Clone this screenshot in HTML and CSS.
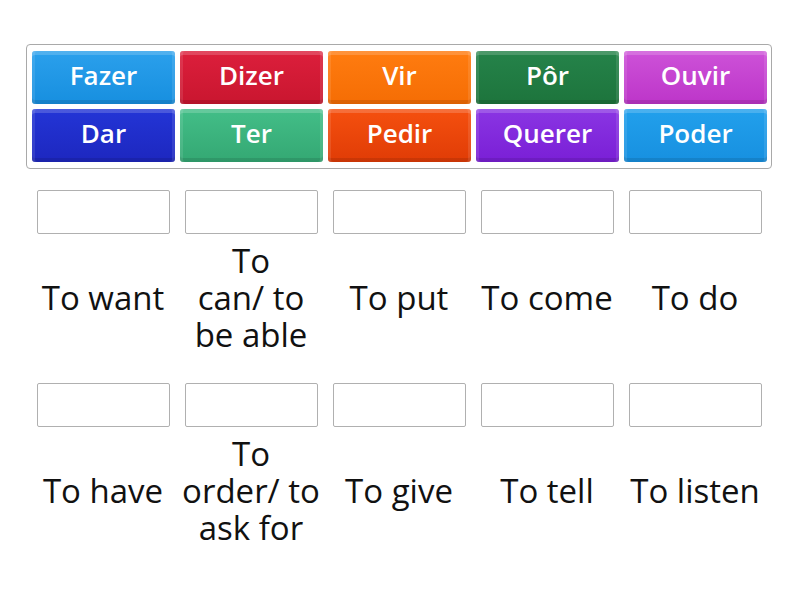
FILE: index.html
```html
<!DOCTYPE html>
<html>
<head>
<meta charset="utf-8">
<link rel="stylesheet" href="styles.css">
</head>
<body>
<div class="page">
  <div class="bank">
    <div class="tile c-blue">Fazer</div>
    <div class="tile c-red">Dizer</div>
    <div class="tile c-orange">Vir</div>
    <div class="tile c-dgreen">Pôr</div>
    <div class="tile c-magenta">Ouvir</div>
    <div class="tile c-navy">Dar</div>
    <div class="tile c-green">Ter</div>
    <div class="tile c-redorange">Pedir</div>
    <div class="tile c-purple">Querer</div>
    <div class="tile c-sky">Poder</div>
  </div>
  <div class="targets">
    <div class="slot"><div class="box"></div><div class="label">To want</div></div>
    <div class="slot"><div class="box"></div><div class="label">To<br>can/ to<br>be able</div></div>
    <div class="slot"><div class="box"></div><div class="label">To put</div></div>
    <div class="slot"><div class="box"></div><div class="label">To come</div></div>
    <div class="slot"><div class="box"></div><div class="label">To do</div></div>
    <div class="slot"><div class="box"></div><div class="label">To have</div></div>
    <div class="slot"><div class="box"></div><div class="label">To<br>order/ to<br>ask for</div></div>
    <div class="slot"><div class="box"></div><div class="label">To give</div></div>
    <div class="slot"><div class="box"></div><div class="label">To tell</div></div>
    <div class="slot"><div class="box"></div><div class="label">To listen</div></div>
  </div>
</div>
</body>
</html>
```
FILE: styles.css
```css
* { box-sizing: border-box; }
html, body { margin: 0; padding: 0; background: #fff; }
body { font-family: "Open Sans", "Liberation Sans", sans-serif; }
.page { padding: 44px 0 0 26px; }
.bank {
  width: 746px;
  border: 1px solid #a9a9a9;
  border-radius: 4px;
  padding: 6px 5px 6px 5px;
  display: grid;
  grid-template-columns: repeat(5, 143px);
  grid-auto-rows: 53px;
  column-gap: 5px;
  row-gap: 5px;
}
.tile {
  border-radius: 3px;
  color: #fff;
  font-weight: 600;
  font-size: 26px;
  display: flex;
  align-items: center;
  justify-content: center;
  padding-bottom: 5px;
  box-shadow: inset 0 4px 0 rgba(255,255,255,0.18), inset 3px 0 0 rgba(255,255,255,0.1), inset -3px 0 0 rgba(255,255,255,0.1), inset 0 -4px 0 rgba(0,0,0,0.1);
}
.c-blue { background: linear-gradient(#2ba0ec, #178fdf); }
.c-red { background: linear-gradient(#dc1f3c, #c9162f); }
.c-orange { background: linear-gradient(#ff7c10, #f56d04); }
.c-dgreen { background: linear-gradient(#25834a, #1d743c); }
.c-magenta { background: linear-gradient(#cd52d8, #bd35c9); }
.c-navy { background: linear-gradient(#2335d6, #1d27bf); }
.c-green { background: linear-gradient(#43be88, #34a873); }
.c-redorange { background: linear-gradient(#f5500f, #e03c06); }
.c-purple { background: linear-gradient(#8a35e3, #7a1fd6); }
.c-sky { background: linear-gradient(#22a0ec, #1790e0); }

.targets {
  margin-top: 21px;
  margin-left: 3px;
  display: grid;
  grid-template-columns: repeat(5, 148px);
  row-gap: 23px;
}
.slot {
  display: flex;
  flex-direction: column;
  align-items: center;
}
.box {
  width: 133px;
  height: 44px;
  border: 1px solid #b0b0b0;
  border-radius: 2px;
  background: #fff;
}
.label {
  height: 126px;
  display: flex;
  align-items: center;
  justify-content: center;
  text-align: center;
  font-size: 33px;
  line-height: 37px;
  color: #111;
  white-space: nowrap;
}
```
